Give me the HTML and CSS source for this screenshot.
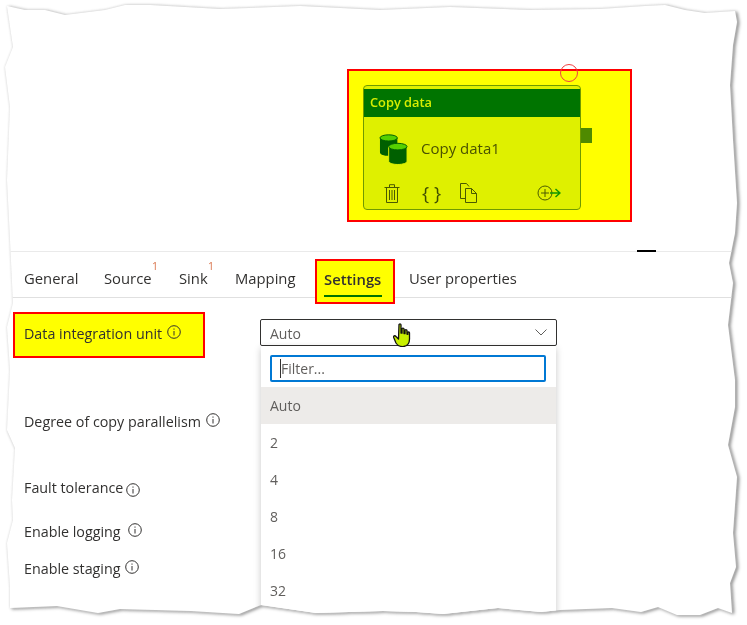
FILE: index.html
```html
<!DOCTYPE html>
<html lang="en">
<head>
<meta charset="utf-8">
<title>Copy data settings</title>
<link rel="stylesheet" href="styles.css">
</head>
<body>
<div class="paper">
  <div class="sheet">
    <section class="canvas">
      <div class="spot">
        <span class="ring"></span>
        <div class="node">
          <div class="node-head">Copy data</div>
          <div class="node-main">
            <svg class="db" width="29" height="31" viewBox="0 0 30 32">
              <path d="M1 4v15c0 2 4 3.500 9 3.500s9-1.500 9-3.500V4z" fill="#006000"/>
              <ellipse cx="10" cy="4" rx="9" ry="3.200" fill="#56d000"/>
              <ellipse cx="10" cy="4" rx="9" ry="3.200" fill="none" stroke="#006000"/>
              <path d="M10 13v15c0 2 4 3.500 9.500 3.500S29 30 29 28V13z" fill="#006000" stroke="#dff000"/>
              <ellipse cx="19.500" cy="13" rx="9.500" ry="3.400" fill="#56d000" stroke="#006000"/>
            </svg>
            <span class="node-name">Copy data1</span>
          </div>
          <div class="node-tools">
            <svg class="tool-trash" width="16" height="19" viewBox="0 0 16 19" fill="none" stroke="#4a5a00">
              <path d="M.5 3.500h15M5.500 3.500v-2.800h5v2.800M2.500 3.500v15h11v-15M5.500 6v10M8 6v10M10.500 6v10"/>
            </svg>
            <span class="braces">{ }</span>
            <svg class="tool-copy" width="17" height="20" viewBox="0 0 17 20" fill="none" stroke="#4a5a00">
              <path d="M5.500 15.500H.5V.5h6l2.500 3M5.500 5.500h6l5 5v9h-11zM11.500 5.500v5h5"/>
            </svg>
            <svg class="tool-add" width="24" height="16" viewBox="0 0 24 16" fill="none">
              <circle cx="8" cy="8" r="7" stroke="#4a5a00"/>
              <path d="M8 4v8M4 8h8" stroke="#4a5a00"/>
              <path d="M13 8h10M18.500 4l4.500 4-4.500 4" stroke="#129600" stroke-width="1.500"/>
            </svg>
          </div>
          <span class="port"></span>
        </div>
      </div>
      <span class="handle"></span>
    </section>

    <nav class="tabs">
      <span class="tab">General</span>
      <span class="tab">Source<sup class="badge">1</sup></span>
      <span class="tab">Sink<sup class="badge">1</sup></span>
      <span class="tab">Mapping</span>
      <span class="tab tab-active"><span class="tab-label">Settings</span></span>
      <span class="tab">User properties</span>
    </nav>

    <div class="form">
      <div class="row-first">
        <div class="label-spot">Data integration unit
          <svg class="info" width="14" height="14" viewBox="0 0 14 14"><circle cx="7" cy="7" r="6.300"/><path d="M7 6v4.500M7 3.500v1.200"/></svg>
        </div>
        <div class="select">
          <span class="select-value">Auto</span>
          <svg width="12" height="7" viewBox="0 0 12 7" fill="none" stroke="#605e5c"><path d="M.5.500 6 6 11.500.500"/></svg>
          <div class="menu">
            <div class="filter"><span class="caret"></span>Filter...</div>
            <div class="option option-on">Auto</div>
            <div class="option">2</div>
            <div class="option">4</div>
            <div class="option">8</div>
            <div class="option">16</div>
            <div class="option">32</div>
          </div>
          <svg class="hand" width="18" height="24" viewBox="0 0 18 24">
            <path d="M6 1.500c1-1 2-.5 2 .5v8l1 .2V5.500c1-.8 2 0 2 .7v4.300l1 .2V7c1-.6 2-.2 2 .8v3.400l.8.1V9c1-.3 1.700.2 1.700 1v6c0 4-2 7-6 7.500-4 .3-6-1-7.500-3.500L.7 14.500c-.5-1.500 1-2.500 2.300-1L5.500 16z" fill="#c8f000" stroke="#111" stroke-width="1.300" stroke-linejoin="round"/>
          </svg>
        </div>
      </div>
      <div class="field field-degree">Degree of copy parallelism
        <svg class="info" width="14" height="14" viewBox="0 0 14 14"><circle cx="7" cy="7" r="6.300"/><path d="M7 6v4.500M7 3.500v1.200"/></svg>
      </div>
      <div class="field field-fault">Fault tolerance
        <svg class="info info-down" width="14" height="14" viewBox="0 0 14 14"><circle cx="7" cy="7" r="6.300"/><path d="M7 6v4.500M7 3.500v1.200"/></svg>
      </div>
      <div class="field field-logging">Enable logging
        <svg class="info info-wide" width="14" height="14" viewBox="0 0 14 14"><circle cx="7" cy="7" r="6.300"/><path d="M7 6v4.500M7 3.500v1.200"/></svg>
      </div>
      <div class="field field-staging">Enable staging
        <svg class="info" width="14" height="14" viewBox="0 0 14 14"><circle cx="7" cy="7" r="6.300"/><path d="M7 6v4.500M7 3.500v1.200"/></svg>
      </div>
    </div>
  </div>
</div>
</body>
</html>
```
FILE: styles.css
```css
* { box-sizing: border-box; }
html, body { margin: 0; background: #fff; }
body {
  width: 747px;
  height: 625px;
  overflow: hidden;
  font-family: "Open Sans", "Noto Sans", sans-serif;
  font-size: 14px;
  color: #323130;
}
.paper {
  width: 747px;
  height: 625px;
  filter: drop-shadow(0 0 1px #e2e2e2) drop-shadow(2.500px 1.500px 1.500px #8c8c8c);
}
.sheet {
  width: 747px;
  height: 625px;
  background: #fff;
  clip-path: polygon(7px 6px, 25px 10px, 45px 10px, 65px 15px, 105px 10px, 125px 5px, 150px 5px, 220px 9px, 300px 6px, 380px 10px, 450px 7px, 530px 10px, 600px 9px, 645px 6px, 665px 5px, 685px 10px, 705px 13px, 735px 11px, 737px 22px, 733px 45px, 730px 85px, 733px 140px, 737px 203px, 735px 233px, 729px 263px, 733px 283px, 728px 325px, 735px 380px, 735px 407px, 728px 445px, 737px 477px, 733px 533px, 736px 567px, 730px 583px, 732px 613px, 718px 608px, 700px 615px, 677px 615px, 658px 607px, 641px 612px, 612px 608px, 560px 610px, 541px 612px, 498px 608px, 443px 614px, 416px 612px, 383px 611px, 316px 613px, 261px 605px, 239px 614px, 191px 611px, 120px 609px, 98px 613px, 57px 606px, 10px 608px, 10px 587px, 7px 543px, 13px 520px, 12px 500px, 15px 448px, 7px 430px, 10px 370px, 7px 327px, 13px 303px, 10px 240px, 7px 180px, 10px 107px, 5px 67px, 13px 47px);
}

/* canvas */
.canvas {
  position: relative;
  height: 252px;
  padding: 69px 0 0 347px;
  border-bottom: 1px solid #eaeaea;
}
.spot {
  position: relative;
  width: 285px;
  height: 153px;
  padding: 14px 0 0 14px;
  background: #ffff00;
  border: 2px solid #ff0000;
}
.ring {
  position: absolute;
  left: 211px;
  top: -7px;
  width: 18px;
  height: 18px;
  border: 1px solid #f04040;
  border-radius: 50%;
}
.node {
  position: relative;
  width: 218px;
  height: 125px;
  display: flex;
  flex-direction: column;
  background: #dff000;
  border: 1px solid #6f9a00;
  border-radius: 4px;
}
.node-head {
  height: 28px;
  margin-top: 3px;
  padding-left: 6px;
  font-size: 12.800px;
  font-weight: 600;
  line-height: 27px;
  color: #d8ee00;
  background: #007400;
}
.node-main {
  display: flex;
  flex: none;
  align-items: center;
  height: 62px;
  padding-left: 15px;
}
.db { margin-top: 2px; }
.node-name {
  margin-left: 13px;
  font-size: 15px;
  color: #4a5200;
}
.node-tools {
  display: flex;
  flex: none;
  align-items: center;
  height: 28px;
  padding-left: 20px;
}
.braces {
  width: 18px;
  margin-left: 22px;
  font-size: 19px;
  line-height: 20px;
  white-space: nowrap;
  color: #3f4d00;
}
.tool-copy { margin-left: 20px; }
.tool-add { margin-left: 60px; }
.port {
  position: absolute;
  right: -12px;
  top: 42px;
  width: 11px;
  height: 15px;
  background: #4f8a00;
}
.handle {
  position: absolute;
  left: 637px;
  top: 250px;
  width: 19px;
  height: 2px;
  background: #000;
}

/* tabs */
.tabs {
  display: grid;
  grid-template-columns: 53px 48px 29px 62px 58px auto;
  align-items: start;
  column-gap: 27px;
  height: 46px;
  padding-left: 24px;
  border-bottom: 1px solid #e0e0e0;
}
.tab {
  position: relative;
  padding-top: 16px;
  line-height: 20px;
  font-size: 14.800px;
  color: #323130;
  white-space: nowrap;
}
.badge {
  position: absolute;
  right: -6px;
  top: 9px;
  font-size: 10.500px;
  line-height: 11px;
  color: #d9734a;
}
.tab-active {
  height: 45px;
  margin: 7px -13px 0 -9px;
  padding: 8px 11px 0 7px;
  background: #ffff00;
  border: 2px solid #ff0000;
  font-weight: 600;
}
.tab-label {
  display: block;
  height: 28px;
  border-bottom: 2px solid #007400;
}

/* form */
.form { padding: 14px 0 0 13px; }
.row-first { display: flex; align-items: flex-start; }
.label-spot {
  width: 192px;
  height: 46px;
  padding-left: 9px;
  font-size: 14.300px;
  line-height: 40px;
  font-weight: 500;
  white-space: nowrap;
  background: #ffff00;
  border: 2px solid #ff0000;
}
.select {
  position: relative;
  display: flex;
  align-items: center;
  justify-content: space-between;
  width: 297px;
  height: 27px;
  margin: 7px 0 0 55px;
  padding: 0 9px;
  color: #605e5c;
  border: 1px solid #323130;
  border-radius: 2px;
}
.select-value { margin-top: 2px; }
.hand { position: absolute; left: 132px; top: 3px; }
.menu {
  position: absolute;
  left: 0;
  top: 26px;
  width: 295px;
  height: 290px;
  padding-top: 9px;
  background: #fff;
  box-shadow: 0 2px 7px rgba(0, 0, 0, .22);
}
.filter {
  position: relative;
  height: 27px;
  margin: 0 10px 5px 9px;
  padding-left: 9px;
  line-height: 23px;
  border: 2px solid #0078d4;
  border-radius: 2px;
}
.caret {
  position: absolute;
  left: 8px;
  top: 2px;
  width: 1px;
  height: 19px;
  background: #323130;
}
.option {
  height: 37px;
  padding-left: 9px;
  line-height: 37px;
}
.option-on { background: #edebe9; }
.field {
  height: 20px;
  line-height: 22px;
  margin-left: 11px;
  font-size: 14.300px;
  font-weight: 500;
  white-space: nowrap;
}
.field-degree { margin-top: 53px; }
.field-fault { margin-top: 46px; }
.field-logging { margin-top: 24px; }
.field-staging { margin-top: 17px; }
.info { margin-left: 1px; fill: none; stroke: #323130; stroke-width: 1; }
.info-down { vertical-align: -4px; margin-left: -1px; }
.info-wide { margin-left: 4px; }
```
